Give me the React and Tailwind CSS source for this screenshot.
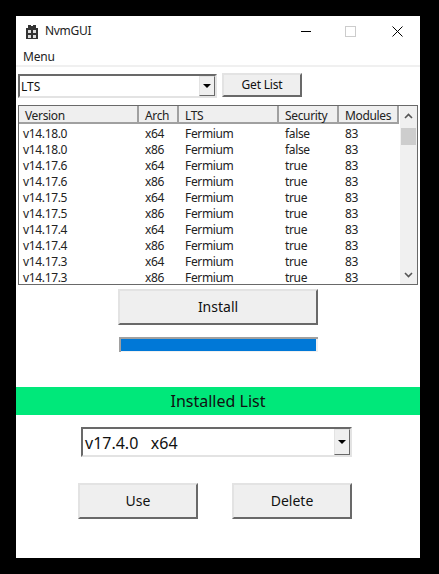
const font = "font-['Noto_Sans','Open_Sans',sans-serif]";

const rows = [
  ["v14.18.0", "x64", "false"],
  ["v14.18.0", "x86", "false"],
  ["v14.17.6", "x64", "true"],
  ["v14.17.6", "x86", "true"],
  ["v14.17.5", "x64", "true"],
  ["v14.17.5", "x86", "true"],
  ["v14.17.4", "x64", "true"],
  ["v14.17.4", "x86", "true"],
  ["v14.17.3", "x64", "true"],
  ["v14.17.3", "x86", "true"],
];

const headers = [
  ["Version", "w-[120px]"],
  ["Arch", "w-[40px]"],
  ["LTS", "w-[100px]"],
  ["Security", "w-[60px]"],
  ["Modules", "w-[60px]"],
];

// raised win32 style button
function Btn({ className, children }) {
  return (
    <div className={`flex items-center justify-center bg-[#efefef] border-2 border-t-[#e3e3e3] border-l-[#e3e3e3] border-r-[#696969] border-b-[#696969] text-[#111] ${className}`}>
      {children}
    </div>
  );
}

function Combo({ className, text, textClass }) {
  return (
    <div className={`flex items-stretch bg-white border-2 border-t-[#696969] border-l-[#696969] border-r-[#e3e3e3] border-b-[#e3e3e3] ${className}`}>
      <span className={`flex-1 flex items-center text-[#111] whitespace-pre ${textClass}`}>{text}</span>
      <div className="w-4 flex items-center justify-center bg-[#efefef] border border-t-[#e3e3e3] border-l-[#e3e3e3] border-r-[#696969] border-b-[#696969]">
        <span className="w-0 h-0 border-x-[4px] border-x-transparent border-t-[4px] border-t-black" />
      </div>
    </div>
  );
}

export default function App() {
  return (
    <div className={`w-[439px] h-[574px] bg-black p-4 ${font}`}>
      <div className="w-[404px] h-[542px] bg-white flex flex-col">
        {/* title bar */}
        <div className="h-[30px] flex items-center pl-[10px] shrink-0">
          <svg width="12" height="14" viewBox="0 0 12 14" shapeRendering="crispEdges" className="mt-[1px]">
            <path d="M2 0h3v1h1v1h0V3H2zM7 0h3v3H6V1h1z" fill="#333" />
            <path d="M0 3h12v11H0z" fill="#333" />
            <path d="M2 5h3v3H2zM7 5h3v3H7zM2 10h3v3H2zM7 10h3v3H7z" fill="#ddd" />
          </svg>
          <span className="ml-[7px] text-[12px] tracking-[-0.3px] text-[#222]">NvmGUI</span>
          <div className="ml-auto flex items-center">
            <svg width="11" height="11" viewBox="0 0 11 11" shapeRendering="crispEdges" className="mr-[33px]"><path d="M0 5h10v1H0z" fill="#000" /></svg>
            <span className="w-[11px] h-[11px] border border-[#ccc] mr-[36px]" />
            <svg width="11" height="11" viewBox="0 0 11 11" className="mr-[17px]"><path d="M.5.5l10 10M10.5.5l-10 10" fill="none" stroke="#000" strokeWidth="1" /></svg>
          </div>
        </div>
        {/* menu */}
        <div className="h-[21px] pl-[7px] pt-[2px] flex items-center text-[12px] tracking-[-0.2px] text-[#222] border-b-2 border-[#f0f0f0] shrink-0">Menu</div>

        {/* list source */}
        <div className="flex items-start mt-[7px] ml-[2px] shrink-0">
          <Combo className="w-[199px] h-[24px]" text="LTS" textClass="pl-[1px] pt-[2px] text-[12px]" />
          <Btn className="w-[80px] h-[24px] ml-[5px] -mt-[1px] text-[12px] tracking-[-0.2px]">Get List</Btn>
        </div>

        {/* version table */}
        <div className="relative ml-[2px] mt-[7px] w-[400px] h-[180px] border border-[#696969] shrink-0 overflow-hidden text-[12px] tracking-[-0.35px] text-[#222]">
          <div className="flex h-[18px]">
            {headers.map(([h, w]) => (
              <div key={h} className={`${w} pl-[6px] pt-[3px] flex items-center bg-[#efefef] border-r-2 border-b-2 border-r-[#a0a0a0] border-b-[#a0a0a0]`}>{h}</div>
            ))}
          </div>
          <div className="pt-[2px]">
            {rows.map((r, i) => (
              <div key={i} className="flex h-[16px] items-center">
                <span className="w-[120px] pl-[4px]">{r[0]}</span>
                <span className="w-[40px] pl-[6px]">{r[1]}</span>
                <span className="w-[100px] pl-[6px]">Fermium</span>
                <span className="w-[60px] pl-[6px]">{r[2]}</span>
                <span className="w-[60px] pl-[6px]">83</span>
              </div>
            ))}
          </div>
          {/* scrollbar */}
          <div className="absolute top-0 right-0 bottom-0 w-[17px] bg-[#f0f0f0] flex flex-col">
            <svg width="17" height="22" viewBox="0 0 17 22" className="shrink-0"><path d="M5 12l3.5-3.5L12 12" fill="none" stroke="#555" strokeWidth="1.6" /></svg>
            <div className="h-[17px] w-[15px] mx-auto bg-[#cdcdcd]" />
            <svg width="17" height="17" viewBox="0 0 17 17" className="mt-auto"><path d="M5 6l3.5 3.5L12 6" fill="none" stroke="#555" strokeWidth="1.6" /></svg>
          </div>
        </div>

        <Btn className="w-[200px] h-[36px] ml-[102px] mt-[4px] pb-[2px] text-[14px] shrink-0">Install</Btn>

        {/* progress */}
        <div className="w-[199px] h-[15px] ml-[103px] mt-[12px] pr-[2px] pb-[1px] bg-[#f0f0f0] border-t-2 border-l-2 border-t-[#a0a0a0] border-l-[#a0a0a0] shrink-0">
          <div className="h-full bg-[#0078d7]" />
        </div>

        <div className="h-[28px] mt-[35px] bg-[#00e87a] flex items-center justify-center text-[16px] text-[#111] shrink-0">Installed List</div>

        <Combo className="w-[271px] h-[30px] ml-[65px] mt-[12px] shrink-0" text="v17.4.0   x64" textClass="pl-[2px] pt-[1px] text-[16px]" />

        <div className="flex mt-[26px] ml-[62px] shrink-0">
          <Btn className="w-[120px] h-[36px] pb-[2px] text-[14px]">Use</Btn>
          <Btn className="w-[120px] h-[36px] ml-[34px] pb-[2px] text-[14px]">Delete</Btn>
        </div>
      </div>
    </div>
  );
}
